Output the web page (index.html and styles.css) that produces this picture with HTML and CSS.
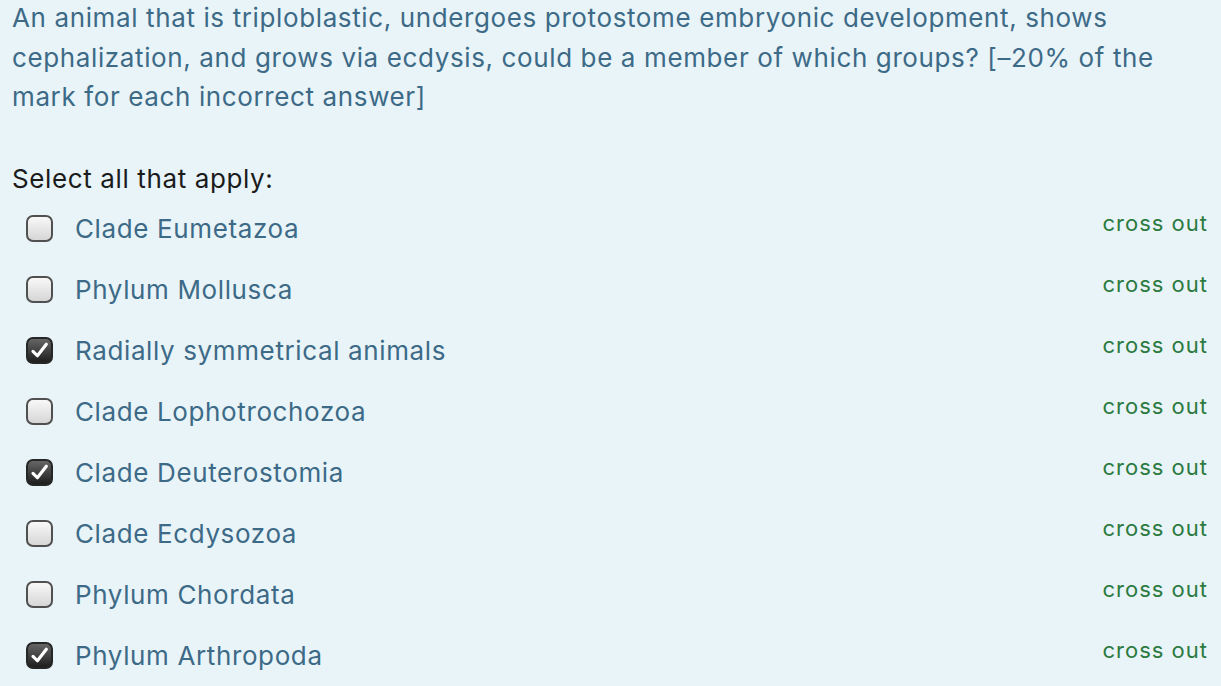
FILE: index.html
```html
<!DOCTYPE html>
<html>
<head>
<meta charset="utf-8">
<link rel="stylesheet" href="styles.css">
</head>
<body>
<div class="page">
  <p class="question">An animal that is triploblastic, undergoes protostome embryonic development, shows cephalization, and grows via ecdysis, could be a member of which groups? [–20% of the mark for each incorrect answer]</p>
  <p class="prompt">Select all that apply:</p>
  <ul class="options">
    <li class="option"><span class="box"></span><span class="label">Clade Eumetazoa</span><span class="cross">cross out</span></li>
    <li class="option"><span class="box"></span><span class="label">Phylum Mollusca</span><span class="cross">cross out</span></li>
    <li class="option"><span class="box checked"><svg viewBox="0 0 20 20"><path d="M3.8 10.8 L8 15 L16.5 4" fill="none" stroke="#fff" stroke-width="3" stroke-linecap="round" stroke-linejoin="round"/></svg></span><span class="label">Radially symmetrical animals</span><span class="cross">cross out</span></li>
    <li class="option"><span class="box"></span><span class="label">Clade Lophotrochozoa</span><span class="cross">cross out</span></li>
    <li class="option"><span class="box checked"><svg viewBox="0 0 20 20"><path d="M3.8 10.8 L8 15 L16.5 4" fill="none" stroke="#fff" stroke-width="3" stroke-linecap="round" stroke-linejoin="round"/></svg></span><span class="label">Clade Deuterostomia</span><span class="cross">cross out</span></li>
    <li class="option"><span class="box"></span><span class="label">Clade Ecdysozoa</span><span class="cross">cross out</span></li>
    <li class="option"><span class="box"></span><span class="label">Phylum Chordata</span><span class="cross">cross out</span></li>
    <li class="option"><span class="box checked"><svg viewBox="0 0 20 20"><path d="M3.8 10.8 L8 15 L16.5 4" fill="none" stroke="#fff" stroke-width="3" stroke-linecap="round" stroke-linejoin="round"/></svg></span><span class="label">Phylum Arthropoda</span><span class="cross">cross out</span></li>
  </ul>
</div>
</body>
</html>
```
FILE: styles.css
```css
html, body {
  margin: 0;
  padding: 0;
  background: #e8f4f8;
  width: 1221px;
  height: 686px;
  overflow: hidden;
}
.page {
  font-family: Inter, "Noto Sans", sans-serif;
  padding: 0 14px 0 12px;
  letter-spacing: 0.62px;
}
.question {
  margin: -2px 0 0 0;
  font-size: 26px;
  line-height: 39.5px;
  color: #3d6a87;
}
.prompt {
  margin: 42px 0 0 0;
  font-size: 26px;
  line-height: 40px;
  color: #1b1b1b;
}
.options {
  list-style: none;
  margin: -1px 0 0 0;
  padding: 0;
}
.option {
  display: flex;
  align-items: center;
  height: 61px;
}
.box {
  flex: none;
  width: 23px;
  height: 23px;
  margin-left: 14px;
  border: 2px solid #505050;
  border-radius: 7px;
  background: linear-gradient(#f8f8f8, #d6d6d6);
  display: flex;
  align-items: center;
  justify-content: center;
}
.box.checked {
  background: linear-gradient(#666666, #1e1e1e);
  border-color: #262626;
}
.box svg {
  width: 21px;
  height: 21px;
}
.label {
  margin-left: 22px;
  font-size: 26px;
  color: #3d6a87;
  flex: 1;
}
.cross {
  font-size: 22px;
  letter-spacing: 1px;
  margin-right: -1px;
  color: #2c7a40;
  position: relative;
  top: -5px;
}
```
